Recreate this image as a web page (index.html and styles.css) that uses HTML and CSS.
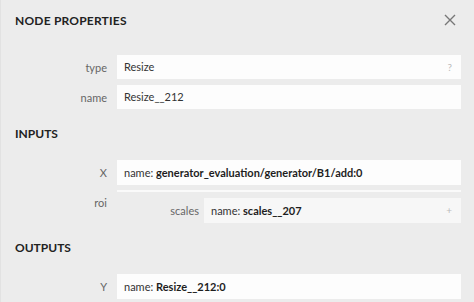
FILE: index.html
```html
<!DOCTYPE html>
<html lang="en">
<head>
  <meta charset="UTF-8" />
  <meta name="viewport" content="width=device-width, initial-scale=1.0"/>
  <title>Node Properties</title>
  <link rel="stylesheet" href="styles.css">
</head>
<body>
  <div class="panel">
    <div class="header">
      <span class="title">NODE PROPERTIES</span>
      <svg class="close" width="12" height="12" viewBox="0 0 12 12">
        <path d="M1 1 L11 11 M11 1 L1 11" stroke="#777" stroke-width="1.4" fill="none"/>
      </svg>
    </div>

    <div class="rows attrs">
      <div class="row">
        <div class="label">type</div>
        <div class="value">Resize<span class="hint">?</span></div>
      </div>
      <div class="row">
        <div class="label">name</div>
        <div class="value">Resize__212</div>
      </div>
    </div>

    <div class="section">INPUTS</div>
    <div class="rows">
      <div class="row">
        <div class="label">X</div>
        <div class="value">name: <b>generator_evaluation/generator/B1/add:0</b></div>
      </div>
      <div class="row">
        <div class="label top">roi</div>
        <div class="group">
          <div class="row">
            <div class="label sub">scales</div>
            <div class="value dim">name: <b>scales__207</b><span class="hint">+</span></div>
          </div>
        </div>
      </div>
    </div>

    <div class="section">OUTPUTS</div>
    <div class="rows">
      <div class="row">
        <div class="label">Y</div>
        <div class="value">name: <b>Resize__212:0</b></div>
      </div>
    </div>
  </div>
</body>
</html>
```

FILE: styles.css
```css
:root {
  --bg: #ececec;
  --box: #fdfdfd;
  --label: #666;
  --text: #333;
}

body {
  margin: 0;
  background: var(--bg);
  font-family: 'Lato', 'Open Sans', sans-serif;
  font-size: 11px;
  color: var(--text);
}

.panel {
  height: 302px;
  padding: 0 13px 0 14px;
  border-left: 1px solid #e2e2e2;
  box-sizing: border-box;
  overflow: hidden;
}

.header {
  height: 40px;
  display: flex;
  align-items: center;
  justify-content: space-between;
}

.title {
  font-weight: bold;
  font-size: 12px;
  color: #222;
  letter-spacing: 0.2px;
}

.close {
  margin-right: 5px;
}

.rows {
  display: flex;
  flex-direction: column;
  gap: 6px;
}

.attrs {
  margin-top: 15px;
}

.row {
  display: flex;
  align-items: center;
}

.label {
  width: 92px;
  text-align: right;
  padding-right: 10px;
  color: var(--label);
  flex-shrink: 0;
}

.label.top {
  align-self: flex-start;
  padding-top: 5px;
}

.label.sub {
  width: 82px;
  padding-right: 5px;
}

.value {
  flex: 1;
  height: 25px;
  line-height: 25px;
  background: var(--box);
  padding: 0 7px;
  position: relative;
  white-space: nowrap;
}

.attrs .value {
  height: 24px;
  line-height: 24px;
}

.value b {
  color: #1e1e1e;
}

.value.dim {
  background: #f7f7f7;
}

.hint {
  position: absolute;
  right: 9px;
  top: 0;
  color: #bbb;
  font-size: 10px;
}

.group {
  flex: 1;
  border-top: 2px solid #fafafa;
  padding-top: 6px;
  margin-top: -1px;
}

.section {
  margin: 17px 0 18px;
  font-weight: bold;
  font-size: 12px;
  color: #222;
  height: 16px;
  line-height: 16px;
}
```
